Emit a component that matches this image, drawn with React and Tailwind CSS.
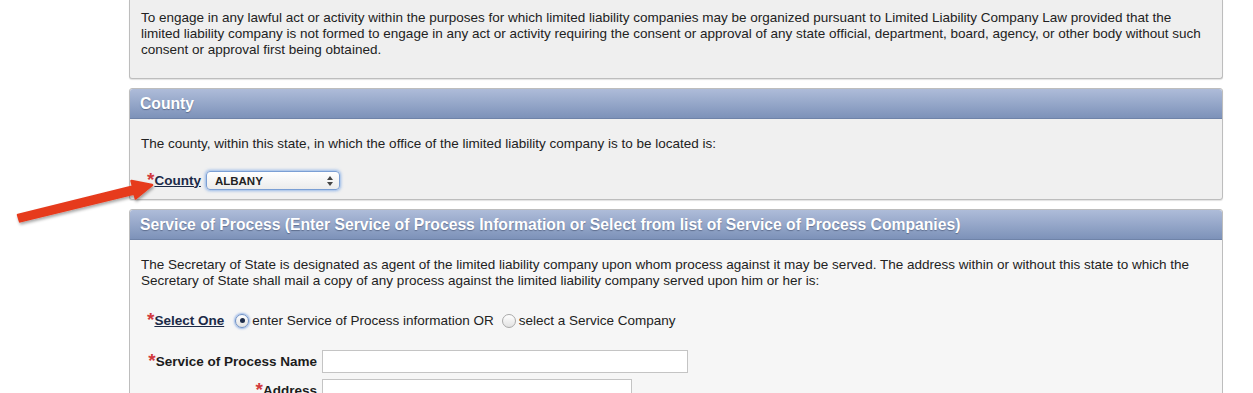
const Star = ({ className = "" }) => (
  <span className={"text-[#d23a3d] text-[19px] font-bold leading-none relative top-[-1px] " + className}>*</span>
);

const PanelHeader = ({ children }) => (
  <div className="h-[30px] flex items-center px-[10px] rounded-t-[3px] bg-gradient-to-b from-[#aebcd9] to-[#7d92b9] border-b border-[#6f83a8]">
    <span className="text-white font-bold text-[15.7px] [text-shadow:0_1px_1px_rgba(40,50,80,0.45)]">{children}</span>
  </div>
);

const Radio = ({ checked }) => (
  <span
    className={
      "inline-flex items-center justify-center w-[14px] h-[14px] rounded-full border bg-gradient-to-b from-white to-[#e2e2e2] " +
      (checked ? "border-[#6d8fc4] shadow-[0_0_2px_1px_rgba(90,140,220,0.6)]" : "border-[#a9a9a9]")
    }
  >
    {checked && <span className="w-[5px] h-[5px] rounded-full bg-[#1d2c4a]" />}
  </span>
);

const Arrow = () => (
  <svg className="absolute left-[14px] top-[160px] pointer-events-none" width="160" height="70" viewBox="0 0 160 70">
    <defs>
      <filter id="sh" x="-10%" y="-20%" width="130%" height="150%">
        <feDropShadow dx="1" dy="2" stdDeviation="1.5" floodColor="#000" floodOpacity="0.35" />
      </filter>
    </defs>
    <polygon
      filter="url(#sh)"
      fill="#e63b1f"
      points="4,55 119,26.5 117.5,21 138,25 121.7,38.4 120.4,33.5 6,61.4"
      strokeLinejoin="round"
      stroke="#e63b1f"
      strokeWidth="2.5"
    />
  </svg>
);

export default function App() {
  return (
    <div
      className="relative w-[1253px] h-[393px] overflow-hidden bg-white text-[#222] text-[13.5px] leading-[16px]"
      style={{ fontFamily: '"Liberation Sans", Arial, sans-serif' }}
    >
      <div className="ml-[129px] w-[1094px] flex flex-col gap-[9px]">
        {/* purpose */}
        <div className="h-[79px] bg-[#efefef] border-x border-b border-[#bdbdbd] rounded-b-[3px] shadow-[0_1px_1px_rgba(0,0,0,0.12)] pt-[10px] px-[11px] whitespace-nowrap">
          To engage in any lawful act or activity within the purposes for which limited liability companies may be organized pursuant to Limited Liability Company Law provided that the
          <br />
          limited liability company is not formed to engage in any act or activity requiring the consent or approval of any state official, department, board, agency, or other body without such
          <br />
          consent or approval first being obtained.
        </div>

        {/* county */}
        <div className="h-[112px] bg-[#f0f0f0] border border-[#bdbdbd] rounded-[3px] shadow-[0_1px_1px_rgba(0,0,0,0.12)]">
          <PanelHeader>County</PanelHeader>
          <div className="px-[11px] pt-[17px]">
            <p>The county, within this state, in which the office of the limited liability company is to be located is:</p>
            <div className="mt-[19px] flex items-center pl-[6px]">
              <Star />
              <span className="font-bold underline text-[#1c2a48]">County</span>
              <div className="ml-[5px] w-[134px] h-[19px] rounded-[4px] border border-[#7b9fd4] shadow-[0_0_3px_1px_rgba(110,160,230,0.7)] bg-gradient-to-b from-white to-[#ececec] flex items-center justify-between pl-[8px] pr-[6px]">
                <span className="text-[11.5px] font-bold text-[#222]">ALBANY</span>
                <svg width="6" height="10" viewBox="0 0 6 10">
                  <polygon points="3,0 6,4 0,4" fill="#444" />
                  <polygon points="0,6 6,6 3,10" fill="#444" />
                </svg>
              </div>
            </div>
          </div>
        </div>

        {/* service of process */}
        <div className="h-[220px] bg-[#f6f6f6] border border-[#bdbdbd] rounded-[3px]">
          <PanelHeader>
            Service of Process (Enter Service of Process Information or Select from list of Service of Process Companies)
          </PanelHeader>
          <div className="px-[11px] pt-[17px]">
            <p className="whitespace-nowrap">
              The Secretary of State is designated as agent of the limited liability company upon whom process against it may be served. The address within or without this state to which the
              <br />
              Secretary of State shall mail a copy of any process against the limited liability company served upon him or her is:
            </p>
            <div className="mt-[22px] flex items-center pl-[6px]">
              <Star />
              <span className="font-bold underline text-[#1c2a48]">Select One</span>
              <span className="ml-[11px] flex items-center gap-[3px]">
                <Radio checked />
                <span>enter Service of Process information OR</span>
              </span>
              <span className="ml-[8px] flex items-center gap-[3px]">
                <Radio />
                <span>select a Service Company</span>
              </span>
            </div>
            <div className="mt-[20px] grid grid-cols-[176px_auto] gap-x-[5px] gap-y-[6px] items-center">
              <div className="flex items-center justify-end">
                <Star />
                <span className="font-bold text-[#1c1c1c]">Service of Process Name</span>
              </div>
              <div className="w-[366px] h-[23px] bg-white border border-[#c4c4c4]" />
              <div className="flex items-center justify-end">
                <Star />
                <span className="font-bold text-[#1c1c1c]">Address</span>
              </div>
              <div className="w-[310px] h-[23px] bg-white border border-[#c4c4c4]" />
            </div>
          </div>
        </div>
      </div>
      <Arrow />
    </div>
  );
}
